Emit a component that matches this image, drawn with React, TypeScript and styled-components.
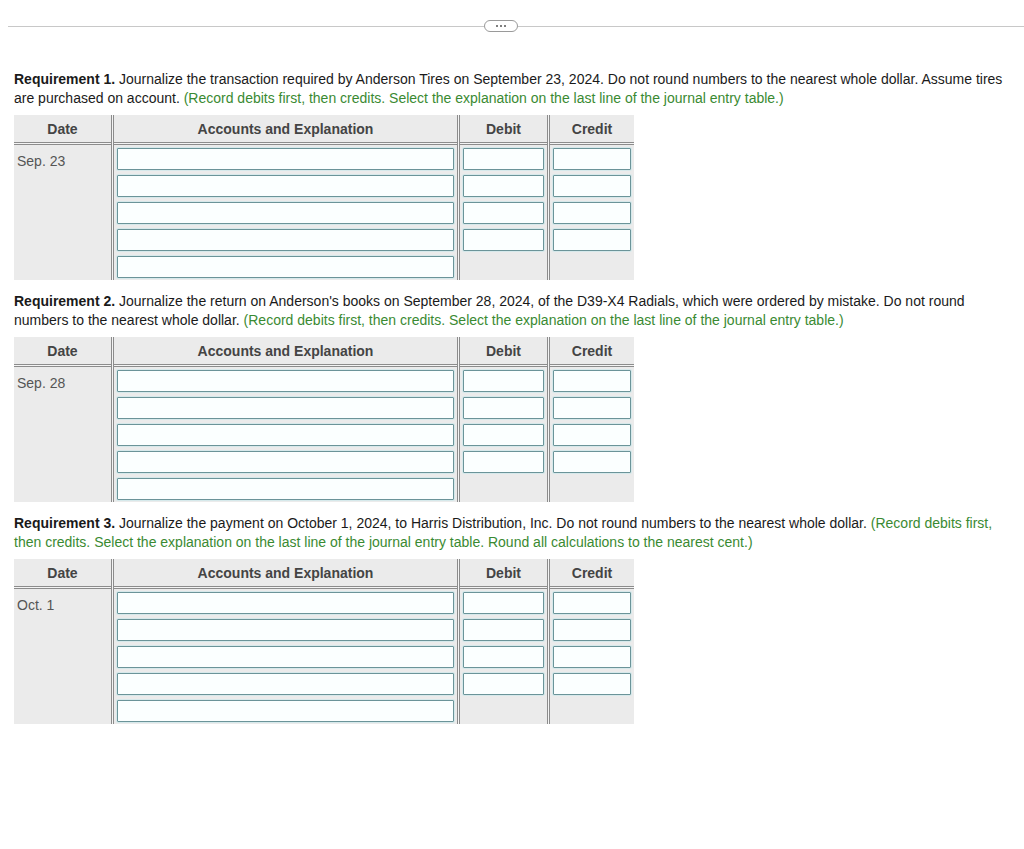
import React from 'react'
import styled, { createGlobalStyle } from 'styled-components'

const GlobalStyle = createGlobalStyle`
  html, body {
    margin: 0;
    padding: 0;
    background: #ffffff;
  }
  body {
    font-family: 'Liberation Sans', Arial, sans-serif;
    font-size: 14px;
    color: #1a1a1a;
  }
`

const Page = styled.div`
  width: 1024px;
  min-height: 849px;
  background: #ffffff;
`

const TopBar = styled.div`
  display: flex;
  align-items: center;
  height: 12px;
  margin: 20px 0 0 8px;
`

const BarLine = styled.div<{ $width?: number }>`
  flex: ${(p) => (p.$width ? `0 0 ${p.$width}px` : '1')};
  height: 1px;
  background: #c8c8c8;
`

const MoreButton = styled.div`
  display: flex;
  align-items: center;
  justify-content: center;
  gap: 2px;
  width: 32px;
  height: 10px;
  border: 1px solid #9a9a9a;
  border-radius: 6px;
  background: #ffffff;
`

const Dot = styled.span`
  width: 2px;
  height: 2px;
  border-radius: 50%;
  background: #555555;
`

const Content = styled.div`
  width: 996px;
  padding: 38px 0 0 14px;
`

const Section = styled.section`
  margin-bottom: 12px;
`

const Prompt = styled.p`
  margin: 0 0 7px;
  line-height: 19px;
  font-size: 14px;
  color: #1a1a1a;
`

const Label = styled.b`
  font-weight: 700;
`

const Hint = styled.span`
  color: #3a8a32;
`

const Table = styled.div`
  display: flex;
  width: 620px;
  height: 165px;
  background: #ebebeb;
`

const Column = styled.div<{ $width: number }>`
  display: flex;
  flex-direction: column;
  width: ${(p) => p.$width}px;
`

const HeadCell = styled.div`
  display: flex;
  align-items: center;
  justify-content: center;
  height: 27px;
  font-weight: 700;
  font-size: 14px;
  color: #444444;
`

const HRule = styled.div`
  height: 1px;
  border-top: 1px solid #8c8c8c;
  border-bottom: 1px solid #8c8c8c;
  background: #f4f4f4;
`

const VRule = styled.div`
  width: 1px;
  border-left: 1px solid #8c8c8c;
  border-right: 1px solid #8c8c8c;
  background: #f4f4f4;
`

const BodyCell = styled.div`
  flex: 1;
  display: flex;
  flex-direction: column;
  gap: 5px;
  padding: 3px 3px 0;
`

const DateText = styled.div`
  padding: 5px 0 0;
  font-size: 14px;
  color: #555555;
`

const Entry = styled.input`
  box-sizing: border-box;
  width: 100%;
  height: 22px;
  margin: 0;
  padding: 0 4px;
  border: 1px solid #6b9499;
  border-radius: 1px;
  background: #fbffff;
  box-shadow: 0 0 0 1px #d6e9eb;
  font-family: 'Liberation Sans', Arial, sans-serif;
  font-size: 13px;
  outline: none;
`

type Requirement = {
  label: string
  text: string
  hint: string
  date: string
}

const requirements: Requirement[] = [
  {
    label: 'Requirement 1.',
    text: 'Journalize the transaction required by Anderson Tires on September 23, 2024. Do not round numbers to the nearest whole dollar. Assume tires are purchased on account.',
    hint: '(Record debits first, then credits. Select the explanation on the last line of the journal entry table.)',
    date: 'Sep. 23'
  },
  {
    label: 'Requirement 2.',
    text: "Journalize the return on Anderson's books on September 28, 2024, of the D39-X4 Radials, which were ordered by mistake. Do not round numbers to the nearest whole dollar.",
    hint: '(Record debits first, then credits. Select the explanation on the last line of the journal entry table.)',
    date: 'Sep. 28'
  },
  {
    label: 'Requirement 3.',
    text: 'Journalize the payment on October 1, 2024, to Harris Distribution, Inc. Do not round numbers to the nearest whole dollar.',
    hint: '(Record debits first, then credits. Select the explanation on the last line of the journal entry table. Round all calculations to the nearest cent.)',
    date: 'Oct. 1'
  }
]

const Inputs = ({ count }: { count: number }) => (
  <>
    {Array.from({ length: count }, (_, i) => (
      <Entry key={i} type='text' aria-label={`line ${i + 1}`} />
    ))}
  </>
)

const JournalTable = ({ date }: { date: string }) => (
  <Table>
    <Column $width={97}>
      <HeadCell>Date</HeadCell>
      <HRule />
      <BodyCell>
        <DateText>{date}</DateText>
      </BodyCell>
    </Column>
    <VRule />
    <Column $width={343}>
      <HeadCell>Accounts and Explanation</HeadCell>
      <HRule />
      <BodyCell>
        <Inputs count={5} />
      </BodyCell>
    </Column>
    <VRule />
    <Column $width={87}>
      <HeadCell>Debit</HeadCell>
      <HRule />
      <BodyCell>
        <Inputs count={4} />
      </BodyCell>
    </Column>
    <VRule />
    <Column $width={84}>
      <HeadCell>Credit</HeadCell>
      <HRule />
      <BodyCell>
        <Inputs count={4} />
      </BodyCell>
    </Column>
  </Table>
)

export default function App() {
  return (
    <Page>
      <GlobalStyle />
      <TopBar>
        <BarLine $width={476} />
        <MoreButton>
          <Dot />
          <Dot />
          <Dot />
        </MoreButton>
        <BarLine />
      </TopBar>
      <Content>
        {requirements.map((r) => (
          <Section key={r.label}>
            <Prompt>
              <Label>{r.label}</Label> {r.text} <Hint>{r.hint}</Hint>
            </Prompt>
            <JournalTable date={r.date} />
          </Section>
        ))}
      </Content>
    </Page>
  )
}
